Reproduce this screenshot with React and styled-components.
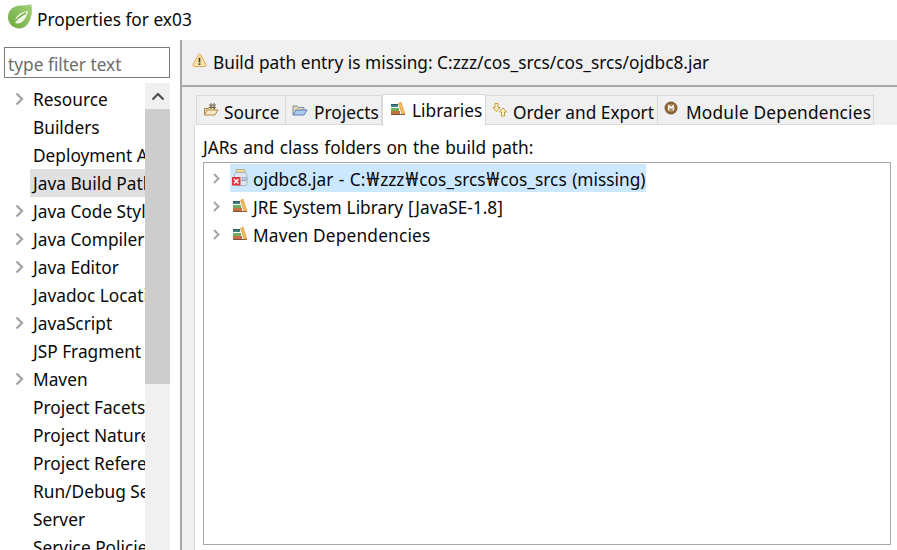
import React from 'react';
import styled, { createGlobalStyle } from 'styled-components';

const Global = createGlobalStyle`
  html, body { margin: 0; padding: 0; background: #fff; overflow: hidden; }
  #root { width: 897px; height: 550px; }
  * { box-sizing: border-box; }
  svg { flex: none; display: block; }
`;
const Page = styled.div`
  width: 897px; height: 550px; display: flex; flex-direction: column; overflow: hidden; background: #fff;
  font-family: "Noto Sans", "Noto Sans CJK KR", sans-serif; font-size: 17.3px; color: #0a0a0a;
`;
const TitleBar = styled.div`
  height: 40px; flex: none; display: flex; align-items: flex-start; padding: 4px 0 0 7px; gap: 4px;
`;
const TitleText = styled.span`line-height: 32px;`;
const Body = styled.div`flex: 1; display: flex; min-height: 0;`;
const Sidebar = styled.div`
  width: 180px; flex: none; display: flex; flex-direction: column; padding: 7px 10px 0 4px;
`;
const FilterInput = styled.div`
  height: 31px; flex: none; border: 1px solid #7a7a7a; color: #6d6d6d; padding: 0 3px; line-height: 33px; white-space: nowrap;
`;
const TreeWrap = styled.div`flex: 1; display: flex; margin-top: 5px; min-height: 0; overflow: hidden;`;
const TreeList = styled.div`width: 141px; flex: none; padding-top: 2px; overflow: hidden;`;
const NavRow = styled.div`
  height: 28px; display: flex; align-items: center; white-space: nowrap; position: relative;
  line-height: 28px; padding: 1px 0 0 29px;
  background: ${p => p.$selected ? 'linear-gradient(#e0e0e0,#e0e0e0) no-repeat 26px 0 / 115px 100%' : 'none'};
`;
const NavChevron = styled.svg`position: absolute; left: 11px; top: 7px; width: 9px; height: 14px;`;
const Scrollbar = styled.div`width: 25px; flex: none; background: #f0f0f0; display: flex; flex-direction: column;`;
const ScrollUp = styled.div`height: 26px; flex: none; display: flex; align-items: center; justify-content: center;`;
const ScrollThumb = styled.div`height: 275px; flex: none; background: #cdcdcd;`;
const Main = styled.div`
  flex: 1; min-width: 0; display: flex; flex-direction: column; border-left: 2px solid #a8a8a8;
`;
const Banner = styled.div`
  height: 47px; flex: none; background: #f0f0f0; border-bottom: 2px solid #a8a8a8; display: flex; align-items: center;
  padding: 0 0 0 10px; gap: 6px; white-space: nowrap;
`;
const BannerIcon = styled.span`flex: none; margin-top: -4px;`;
const Content = styled.div`flex: 1; display: flex; background: #f0f0f0; padding: 8px 0 0 12px; min-height: 0;`;
const TabFolder = styled.div`flex: 1; display: flex; flex-direction: column; min-width: 0;`;
const TabStrip = styled.div`height: 30px; flex: none; display: flex; align-items: flex-end; padding-left: 2px; position: relative; z-index: 1;`;
const Tab = styled.div`
  display: flex; align-items: center; white-space: nowrap; gap: ${p => p.$gap || 5}px;
  height: ${p => p.$active ? 32 : 30}px; width: ${p => p.$w}px; flex: none;
  padding: ${p => p.$active ? '0 0 1px 7px' : '5px 0 0 6px'};
  background: ${p => p.$active ? '#fff' : '#f0f0f0'};
  border: 1px solid #d9d9d9; border-left-width: ${p => p.$first || p.$active ? 1 : 0}px;
  border-bottom: ${p => p.$active ? 'none' : '1px solid #d9d9d9'};
  margin-bottom: ${p => p.$active ? -1 : 0}px;
  letter-spacing: ${p => p.$track || 0}px;
`;
const TabIcon = styled.span`flex: none; margin-top: ${p => p.$up ?? -6}px;`;
const TabBody = styled.div`
  flex: 1; background: #fff; border-left: 1px solid #d9d9d9; display: flex; flex-direction: column; padding: 8px 6px 5px 8px; min-height: 0;
`;
const Caption = styled.div`height: 29px; flex: none; line-height: 30px; white-space: nowrap; word-spacing: 1px;`;
const TableBox = styled.div`flex: 1; border: 1px solid #a8a8a8; padding: 1px; min-height: 0;`;
const EntryRow = styled.div`height: 28px; display: flex; align-items: center; white-space: nowrap; padding-left: 7px;`;
const EntryBody = styled.div`
  display: flex; align-items: center; height: 28px; padding: 2px 1px 0 2px; gap: 5px;
  margin-left: 9px;
  background: ${p => p.$selected ? '#cce8ff' : 'transparent'};
  word-spacing: ${p => p.$spread || 0}px;
  letter-spacing: ${p => p.$track || 0}px;
`;
const EntryIcon = styled.span`flex: none; margin-top: -3px;`;
const Won = styled.span`font-size: 19px; line-height: 0; margin: 0 1px;`;

const Chevron = ({ c = '#a6a6a6' }) => (
  <svg width="9" height="11" viewBox="0 0 9 11" fill="none"><path d="M2 1l4.500 4.500L2 10" stroke={c} strokeWidth="2" /></svg>
);
const Books = () => (
  <svg width="16" height="16" viewBox="0 0 16 16">
    <rect x="1" y="3" width="7" height="3" fill="#3f7f80" />
    <rect x="1" y="3" width="7" height="1" fill="#2d5a60" />
    <rect x="1" y="7" width="8" height="3" fill="#71ad5c" />
    <rect x="1" y="10" width="9" height="3" fill="#c4703f" />
    <rect x="1" y="13" width="14" height="1" fill="#7a5238" />
    <path d="M8.500 2.500L11 1l4 12h-3z" fill="#f5bb5c" stroke="#cf9236" strokeWidth=".6" />
  </svg>
);
const Warning = () => (
  <svg width="15" height="15" viewBox="0 0 16 16">
    <path d="M8 1.200c.7 0 1 .4 1.300.9l5.600 10.400c.5 1 0 2-1.200 2H2.300c-1.200 0-1.700-1-1.200-2L6.700 2.100c.3-.5.600-.9 1.300-.9z" fill="#fbe3a8" stroke="#dca35c" />
    <rect x="7.100" y="5" width="1.800" height="5" fill="#4a4030" />
    <rect x="7.100" y="11" width="1.800" height="1.800" fill="#4a4030" />
  </svg>
);
const SourceIcon = () => (
  <svg width="16" height="16" viewBox="0 0 16 16" fill="none">
    <path d="M1.500 13V6.500h4l1-1.500h5v3" fill="#f3dfae" stroke="#a58048" />
    <path d="M1.500 13l2.500-5h11l-3 5z" fill="#f8e8c2" stroke="#b08a50" />
    <path d="M8 1v6M11 1v6M6 3h7M6 5.500h7" stroke="#6a5a48" strokeWidth=".9" />
  </svg>
);
const ProjectIcon = () => (
  <svg width="16" height="14" viewBox="0 0 16 14" fill="none">
    <path d="M1 12V3h4l1 1.500h6V7" fill="#e5d9a6" stroke="#7d8fb0" />
    <path d="M1 12l3-5h11l-3 5z" fill="#a9cbee" stroke="#5c7fb0" />
  </svg>
);
const OrderIcon = () => (
  <svg width="16" height="16" viewBox="0 0 16 16">
    <path d="M3 1.500h3v4h2l-3.500 4L1 5.500h2z" fill="#fdf3c8" stroke="#c79b3a" />
    <path d="M11 6l3.500 4H12.500v4h-3v-4H7.500z" fill="#fdf3c8" stroke="#c79b3a" />
  </svg>
);
const ModuleIcon = () => (
  <svg width="14" height="14" viewBox="0 0 14 14">
    <circle cx="7" cy="7" r="6.500" fill="#8a6236" />
    <circle cx="7" cy="7" r="4" fill="#b08a5c" />
    <path d="M4.800 9.500V4.800L7 7l2.200-2.200v4.700" fill="none" stroke="#fff" strokeWidth="1.200" />
  </svg>
);
const JarMissing = () => (
  <svg width="16" height="17" viewBox="0 0 16 17">
    <rect x="4" y="0.500" width="9" height="3" rx="1" fill="#f0d88c" stroke="#a99a70" strokeWidth=".7" />
    <path d="M4 3.500h9c1.500 1 2 2 2 3.500v7c0 1.500-1 2.500-2 2.500H5c-1.500 0-2.500-1-2.500-2.500V6.500c0-1 .5-2 1.500-3z" fill="#dde5f0" stroke="#9aa5b8" strokeWidth=".8" />
    <rect x="0" y="8" width="8.500" height="8.500" fill="#e6323f" />
    <path d="M2 10l4.500 4.500M6.500 10L2 14.500" stroke="#fff" strokeWidth="1.500" />
    <text x="9" y="12" fontSize="5" fill="#4a6a9a" fontFamily="Liberation Sans">10</text>
  </svg>
);
const SpringLogo = () => (
  <svg width="26" height="26" viewBox="0 0 26 26">
    <defs>
      <linearGradient id="sg" x1="0" y1="1" x2="1" y2="0">
        <stop offset="0" stopColor="#6aa83c" />
        <stop offset="1" stopColor="#a5d27a" />
      </linearGradient>
    </defs>
    <path d="M13 1.500c4 0 7-.5 11.500-1 .8 5 .8 9.500-1 14C21.500 21 17 24.500 12.500 24.500 6 24.500 1 19.500 1 13S6.500 1.500 13 1.500z" fill="url(#sg)" />
    <path d="M8 18.500C8 12 13 8.500 21 7c-1.500 6.500-5 12-9.500 12.500-1.500.2-2.700-.2-3.500-1z" fill="#f2f7ea" />
    <path d="M5.500 20.500C9 15.500 13 12 19 9" stroke="#79b146" strokeWidth="1.400" fill="none" />
  </svg>
);

const navItems = [
  ['Resource', true], ['Builders'], ['Deployment Assembly'], ['Java Build Path', false, true],
  ['Java Code Style', true], ['Java Compiler', true], ['Java Editor', true], ['Javadoc Location'],
  ['JavaScript', true], ['JSP Fragment'], ['Maven', true], ['Project Facets'], ['Project Natures'],
  ['Project References'], ['Run/Debug Settings'], ['Server'], ['Service Policies'],
];

export default function App() {
  return (
    <Page>
      <Global />
      <TitleBar>
        <SpringLogo />
        <TitleText>Properties for ex03</TitleText>
      </TitleBar>
      <Body>
        <Sidebar>
          <FilterInput>type filter text</FilterInput>
          <TreeWrap>
            <TreeList>
              {navItems.map(([label, hasKids, selected]) => (
                <NavRow key={label} $selected={selected}>
                  {hasKids && <NavChevron viewBox="0 0 9 14" fill="none"><path d="M1.500 1.500L7 7l-5.500 5.500" stroke="#a6a6a6" strokeWidth="2.400" /></NavChevron>}
                  {label}
                </NavRow>
              ))}
            </TreeList>
            <Scrollbar>
              <ScrollUp>
                <svg width="14" height="9" viewBox="0 0 14 9" fill="none"><path d="M1.500 7.500L7 2l5.500 5.500" stroke="#505050" strokeWidth="2.200" /></svg>
              </ScrollUp>
              <ScrollThumb />
            </Scrollbar>
          </TreeWrap>
        </Sidebar>
        <Main>
          <Banner>
            <BannerIcon><Warning /></BannerIcon>
            <span>Build path entry is missing: C:zzz/cos_srcs/cos_srcs/ojdbc8.jar</span>
          </Banner>
          <Content>
            <TabFolder>
              <TabStrip>
                <Tab $w={90} $first><TabIcon><SourceIcon /></TabIcon>Source</Tab>
                <Tab $w={96} $gap={6}><TabIcon><ProjectIcon /></TabIcon>Projects</Tab>
                <Tab $w={104} $active $gap={6}><TabIcon $up={-3}><Books /></TabIcon>Libraries</Tab>
                <Tab $w={172} $gap={5}><TabIcon><OrderIcon /></TabIcon>Order and Export</Tab>
                <Tab $w={216} $gap={8} $track={0.2}><TabIcon $up={-9}><ModuleIcon /></TabIcon>Module Dependencies</Tab>
              </TabStrip>
              <TabBody>
                <Caption>JARs and class folders on the build path:</Caption>
                <TableBox>
                  <EntryRow>
                    <Chevron />
                    <EntryBody $selected $spread={1}>
                      <EntryIcon><JarMissing /></EntryIcon>
                      <span>ojdbc8.jar - C:<Won>₩</Won>zzz<Won>₩</Won>cos_srcs<Won>₩</Won>cos_srcs (missing)</span>
                    </EntryBody>
                  </EntryRow>
                  <EntryRow>
                    <Chevron />
                    <EntryBody $spread={0.4}><EntryIcon><Books /></EntryIcon><span>JRE System Library [JavaSE-1.8]</span></EntryBody>
                  </EntryRow>
                  <EntryRow>
                    <Chevron />
                    <EntryBody $track={0.17}><EntryIcon><Books /></EntryIcon><span>Maven Dependencies</span></EntryBody>
                  </EntryRow>
                </TableBox>
              </TabBody>
            </TabFolder>
          </Content>
        </Main>
      </Body>
    </Page>
  );
}
